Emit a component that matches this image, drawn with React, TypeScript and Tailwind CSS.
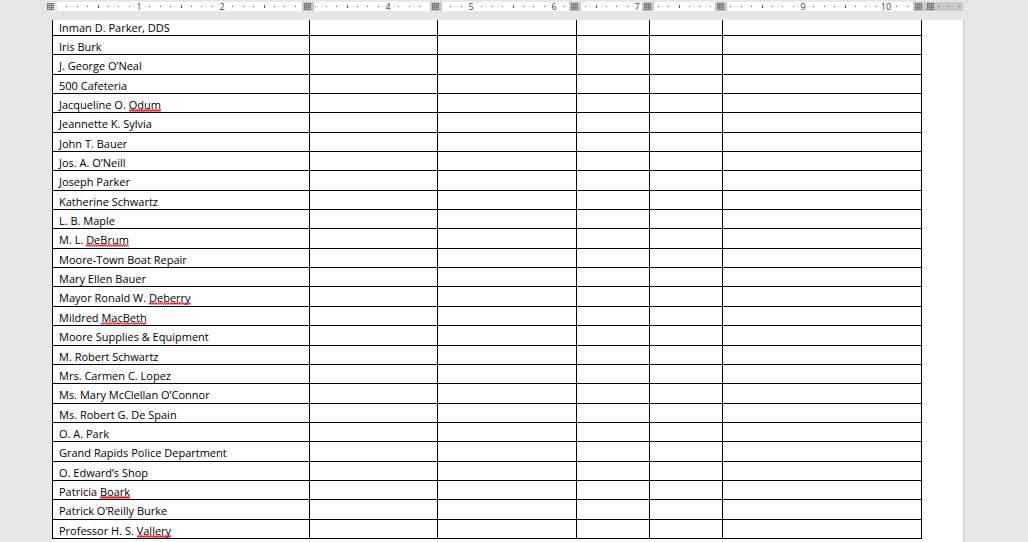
import React from "react";

type Row = { text: string; typo?: string };

const ROWS: Row[] = [
  { text: "Inman D. Parker, DDS" },
  { text: "Iris Burk" },
  { text: "J. George O’Neal" },
  { text: "500 Cafeteria" },
  { text: "Jacqueline O. ", typo: "Odum" },
  { text: "Jeannette K. Sylvia" },
  { text: "John T. Bauer" },
  { text: "Jos. A. O’Neill" },
  { text: "Joseph Parker" },
  { text: "Katherine Schwartz" },
  { text: "L. B. Maple" },
  { text: "M. L. ", typo: "DeBrum" },
  { text: "Moore-Town Boat Repair" },
  { text: "Mary Ellen Bauer" },
  { text: "Mayor Ronald W. ", typo: "Deberry" },
  { text: "Mildred ", typo: "MacBeth" },
  { text: "Moore Supplies & Equipment" },
  { text: "M. Robert Schwartz" },
  { text: "Mrs. Carmen C. Lopez" },
  { text: "Ms. Mary McClellan O’Connor" },
  { text: "Ms. Robert G. De Spain" },
  { text: "O. A. Park" },
  { text: "Grand Rapids Police Department" },
  { text: "O. Edward’s Shop" },
  { text: "Patricia ", typo: "Boark" },
  { text: "Patrick O’Reilly Burke" },
  { text: "Professor H. S. ", typo: "Vallery" },
];

// ruler geometry: zero at x=56, one inch = 83px
const X0 = 56;
const PPI = 83;
const MARKERS = [302, 430, 569, 642, 715];

function GridIcon({ x, y }: { x: number; y: number }) {
  return (
    <g fill="#7b7b7b">
      {[0, 2, 4, 6].map((i) => (
        <rect key={"v" + i} x={x + i} y={y} width={1} height={7} />
      ))}
      {[0, 2, 4, 6].map((i) => (
        <rect key={"h" + i} x={x} y={y + i} width={7} height={1} />
      ))}
    </g>
  );
}

function Ruler() {
  const ticks = [];
  for (let k = 1; X0 + (k * PPI) / 8 < 962; k++) {
    const x = Math.round(X0 + (k * PPI) / 8);
    if (k % 8 === 0) {
      ticks.push(
        <text
          key={k}
          x={x}
          y={9.5}
          textAnchor="middle"
          fontSize={9}
          fill="#3c3c3c"
          fontFamily="'Open Sans', sans-serif"
        >
          {k / 8}
        </text>
      );
    } else if (k % 4 === 0) {
      ticks.push(<rect key={k} x={x} y={5} width={1} height={3} fill="#555" />);
    } else {
      ticks.push(<rect key={k} x={x} y={6} width={1} height={1} fill="#555" />);
    }
  }

  return (
    <svg width={1028} height={20} className="block">
      <rect x={57} y={2} width={856} height={9} fill="#ffffff" />
      <rect x={913} y={2} width={50} height={9} fill="#c8c8c8" />
      {ticks}
      {MARKERS.map((m) => (
        <g key={m}>
          <rect x={m} y={2} width={12} height={9} fill="#c8c8c8" />
          <GridIcon x={m + 2} y={3} />
        </g>
      ))}
      <rect x={913} y={2} width={24} height={9} fill="#c8c8c8" />
      <GridIcon x={915} y={3} />
      <GridIcon x={927} y={3} />
      <GridIcon x={47} y={3} />
    </svg>
  );
}

// red spell-check squiggle drawn under a word
function Squiggle() {
  const pts: string[] = [];
  for (let x = 0; x <= 80; x += 2) pts.push(`${x},${(x / 2) % 2 === 0 ? 2.5 : 0.5}`);
  return (
    <svg
      className="absolute left-0 top-full -mt-[3px] w-full h-[3px] overflow-hidden"
      preserveAspectRatio="none"
      viewBox="0 0 80 3"
    >
      <polyline points={pts.join(" ")} fill="none" stroke="#e81123" strokeWidth={1} vectorEffect="non-scaling-stroke" />
    </svg>
  );
}

function TableRow({ row }: { row: Row }) {
  const cell = "h-full border-r border-black";
  return (
    <div className="grid grid-cols-[257px_128px_139px_73px_73px_199px] h-[19.35px] border-b border-black">
      <div className={`${cell} pl-[6px] pt-[1px] leading-[19px] whitespace-nowrap overflow-hidden`}>
        {row.text}
        {row.typo && (
          <span className="relative inline-block leading-[15px]">
            {row.typo}
            <Squiggle />
          </span>
        )}
      </div>
      <div className={cell} />
      <div className={cell} />
      <div className={cell} />
      <div className={cell} />
      <div className={cell} />
    </div>
  );
}

export default function App() {
  return (
    <div className="w-[1028px] h-[542px] bg-[#e6e6e6] overflow-hidden flex flex-col font-['Open_Sans',sans-serif] text-[11px] text-black">
      <div className="h-[20px] shrink-0">
        <Ruler />
      </div>

      <div className="flex flex-1 min-h-0">
        <div className="w-[52px] shrink-0" />
        {/* page */}
        <div className="w-[911px] shrink-0 bg-white overflow-hidden">
          <div className="-mt-[3.35px] w-[870px] border-l border-black">
            {ROWS.map((r, i) => (
              <TableRow key={i} row={r} />
            ))}
          </div>
        </div>
        <div className="w-px shrink-0 bg-[#c6c6c6]" />
      </div>
    </div>
  );
}
